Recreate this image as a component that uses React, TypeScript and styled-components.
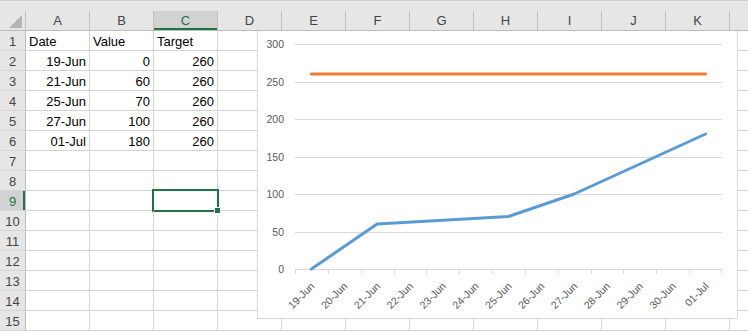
import { Fragment } from "react";
import styled, { createGlobalStyle } from "styled-components";

const GlobalStyle = createGlobalStyle`
  html, body {
    margin: 0;
    padding: 0;
    background: #ffffff;
    overflow: hidden;
  }
  body {
    font-family: "Liberation Sans", Arial, sans-serif;
  }
`;

const green = "#217346";

const Page = styled.div`
  position: relative;
  width: 748px;
  height: 331px;
  overflow: hidden;
  background: #ffffff;
`;

const HeaderRow = styled.div`
  position: relative;
  z-index: 2;
  display: grid;
  grid-template-columns: 26px repeat(12, 64px);
  height: 31px;
  box-sizing: border-box;
  padding-top: 10px;
  background: #e6e6e6;
  border-top: 1px solid #cfcfcf;
  border-bottom: 1px solid #bcbcbc;
`;

const Corner = styled.div`
  display: flex;
  justify-content: flex-end;
  align-items: flex-end;
  padding: 0 3px 2px 0;
  box-sizing: border-box;
  border-right: 1px solid #c2c2c2;
`;

const CornerTriangle = styled.div`
  width: 0;
  height: 0;
  border-left: 13px solid transparent;
  border-bottom: 13px solid #b5b5b5;
`;

const ColHead = styled.div<{ $active?: boolean }>`
  display: flex;
  align-items: center;
  justify-content: center;
  box-sizing: border-box;
  border-right: 1px solid #c2c2c2;
  font-size: 13px;
  color: ${(p) => (p.$active ? green : "#444444")};
  background: ${(p) => (p.$active ? "#d2d2d2" : "transparent")};
  box-shadow: ${(p) => (p.$active ? `inset 0 -2px 0 ${green}` : "none")};
`;

const Body = styled.div`
  display: grid;
  grid-template-columns: 26px repeat(12, 64px);
  grid-auto-rows: 20px;
`;

const RowHead = styled.div<{ $active?: boolean }>`
  display: flex;
  align-items: center;
  justify-content: center;
  box-sizing: border-box;
  padding-top: 1px;
  border-right: 1px solid #bcbcbc;
  border-bottom: 1px solid #d6d6d6;
  font-size: 13px;
  color: ${(p) => (p.$active ? green : "#444444")};
  background: ${(p) => (p.$active ? "#d2d2d2" : "#e6e6e6")};
  box-shadow: ${(p) => (p.$active ? `inset -2px 0 0 ${green}` : "none")};
`;

const Cell = styled.div<{ $align?: "left" | "right"; $selected?: boolean }>`
  position: relative;
  display: flex;
  align-items: flex-end;
  justify-content: ${(p) => (p.$align === "right" ? "flex-end" : "flex-start")};
  box-sizing: border-box;
  padding: 0 3px 1px 3px;
  border-right: 1px solid #d4d4d4;
  border-bottom: 1px solid #d4d4d4;
  font-size: 13px;
  line-height: 15px;
  color: #000000;
  white-space: nowrap;

  ${(p) =>
    p.$selected &&
    `
    &::after {
      content: "";
      position: absolute;
      top: -2px;
      left: -2px;
      right: -2px;
      bottom: -2px;
      border: 2px solid ${green};
    }
    &::before {
      content: "";
      position: absolute;
      right: -4px;
      bottom: -4px;
      width: 5px;
      height: 5px;
      background: ${green};
      border: 1px solid #ffffff;
      z-index: 1;
    }
  `}
`;

const Chart = styled.div`
  position: absolute;
  z-index: 1;
  left: 257px;
  top: 30px;
  width: 481px;
  height: 289px;
  box-sizing: border-box;
  background: #ffffff;
  outline: 1px solid #d9d9d9;
  outline-offset: -1px;
`;

const ChartSvg = styled.svg`
  display: block;
  font-family: "Liberation Sans", Arial, sans-serif;
  font-size: 10.5px;
`;

// L is only a sliver at the right edge, its letter is not visible
const columns = ["A", "B", "C", "D", "E", "F", "G", "H", "I", "J", "K", ""];

type CellData = { text: string; align: "left" | "right" };

const sheet: Record<number, CellData[]> = {
  1: [
    { text: "Date", align: "left" },
    { text: "Value", align: "left" },
    { text: "Target", align: "left" },
  ],
  2: [
    { text: "19-Jun", align: "right" },
    { text: "0", align: "right" },
    { text: "260", align: "right" },
  ],
  3: [
    { text: "21-Jun", align: "right" },
    { text: "60", align: "right" },
    { text: "260", align: "right" },
  ],
  4: [
    { text: "25-Jun", align: "right" },
    { text: "70", align: "right" },
    { text: "260", align: "right" },
  ],
  5: [
    { text: "27-Jun", align: "right" },
    { text: "100", align: "right" },
    { text: "260", align: "right" },
  ],
  6: [
    { text: "01-Jul", align: "right" },
    { text: "180", align: "right" },
    { text: "260", align: "right" },
  ],
};

const dates = [
  "19-Jun",
  "20-Jun",
  "21-Jun",
  "22-Jun",
  "23-Jun",
  "24-Jun",
  "25-Jun",
  "26-Jun",
  "27-Jun",
  "28-Jun",
  "29-Jun",
  "30-Jun",
  "01-Jul",
];

// points as [date index, value]
const valueSeries: [number, number][] = [
  [0, 0],
  [2, 60],
  [6, 70],
  [8, 100],
  [12, 180],
];
const targetSeries: [number, number][] = valueSeries.map(([i]) => [i, 260]);

// plot geometry, relative to the chart box
const plotLeft = 38;
const plotRight = 465;
const catWidth = (plotRight - plotLeft) / dates.length;
const yOf = (v: number) => 239 - v * 0.75;
const xOf = (i: number) => plotLeft + catWidth * (i + 0.5);

const toPoints = (s: [number, number][]) =>
  s.map(([i, v]) => `${xOf(i).toFixed(1)},${yOf(v).toFixed(1)}`).join(" ");

function LineChart() {
  const ticks = [0, 50, 100, 150, 200, 250, 300];
  return (
    <Chart>
      <ChartSvg width={481} height={289} viewBox="0 0 481 289">
        {ticks.map((t) => {
          const y = Math.round(yOf(t)) + 0.5;
          return (
            <g key={t}>
              <line
                x1={plotLeft}
                x2={plotRight}
                y1={y}
                y2={y}
                stroke="#d9d9d9"
                strokeWidth={1}
              />
              <text
                x={27}
                y={y - 0.5}
                textAnchor="end"
                dominantBaseline="central"
                fill="#595959"
              >
                {t}
              </text>
            </g>
          );
        })}
        {dates.map((_, k) => {
          const x = Math.round(plotLeft + catWidth * k) + 0.5;
          return (
            <line
              key={"t" + k}
              x1={x}
              x2={x}
              y1={239.5}
              y2={244}
              stroke="#d9d9d9"
              strokeWidth={1}
            />
          );
        })}
        <line
          x1={plotRight - 0.5}
          x2={plotRight - 0.5}
          y1={239.5}
          y2={244}
          stroke="#d9d9d9"
          strokeWidth={1}
        />
        {dates.map((d, i) => {
          const x = xOf(i) + 1;
          const y = 254;
          return (
            <text
              key={d}
              x={x}
              y={y}
              textAnchor="end"
              dominantBaseline="central"
              fill="#595959"
              transform={`rotate(-45 ${x} ${y})`}
            >
              {d}
            </text>
          );
        })}
        <polyline
          points={toPoints(targetSeries)}
          fill="none"
          stroke="#ED7D31"
          strokeWidth={3}
          strokeLinecap="round"
          strokeLinejoin="round"
        />
        <polyline
          points={toPoints(valueSeries)}
          fill="none"
          stroke="#5B9BD5"
          strokeWidth={3}
          strokeLinecap="round"
          strokeLinejoin="round"
        />
      </ChartSvg>
    </Chart>
  );
}

export default function App() {
  const rows = Array.from({ length: 15 }, (_, i) => i + 1);
  return (
    <Page>
      <GlobalStyle />
      <HeaderRow>
        <Corner>
          <CornerTriangle />
        </Corner>
        {columns.map((c, ci) => (
          <ColHead key={"c" + ci} $active={c === "C"}>
            {c}
          </ColHead>
        ))}
      </HeaderRow>
      <Body>
        {rows.map((r) => (
          <Fragment key={r}>
            <RowHead $active={r === 9}>{r}</RowHead>
            {columns.map((c, ci) => {
              const data = sheet[r]?.[ci];
              return (
                <Cell
                  key={ci}
                  $align={data?.align}
                  $selected={r === 9 && c === "C"}
                >
                  {data?.text}
                </Cell>
              );
            })}
          </Fragment>
        ))}
      </Body>
      <LineChart />
    </Page>
  );
}
